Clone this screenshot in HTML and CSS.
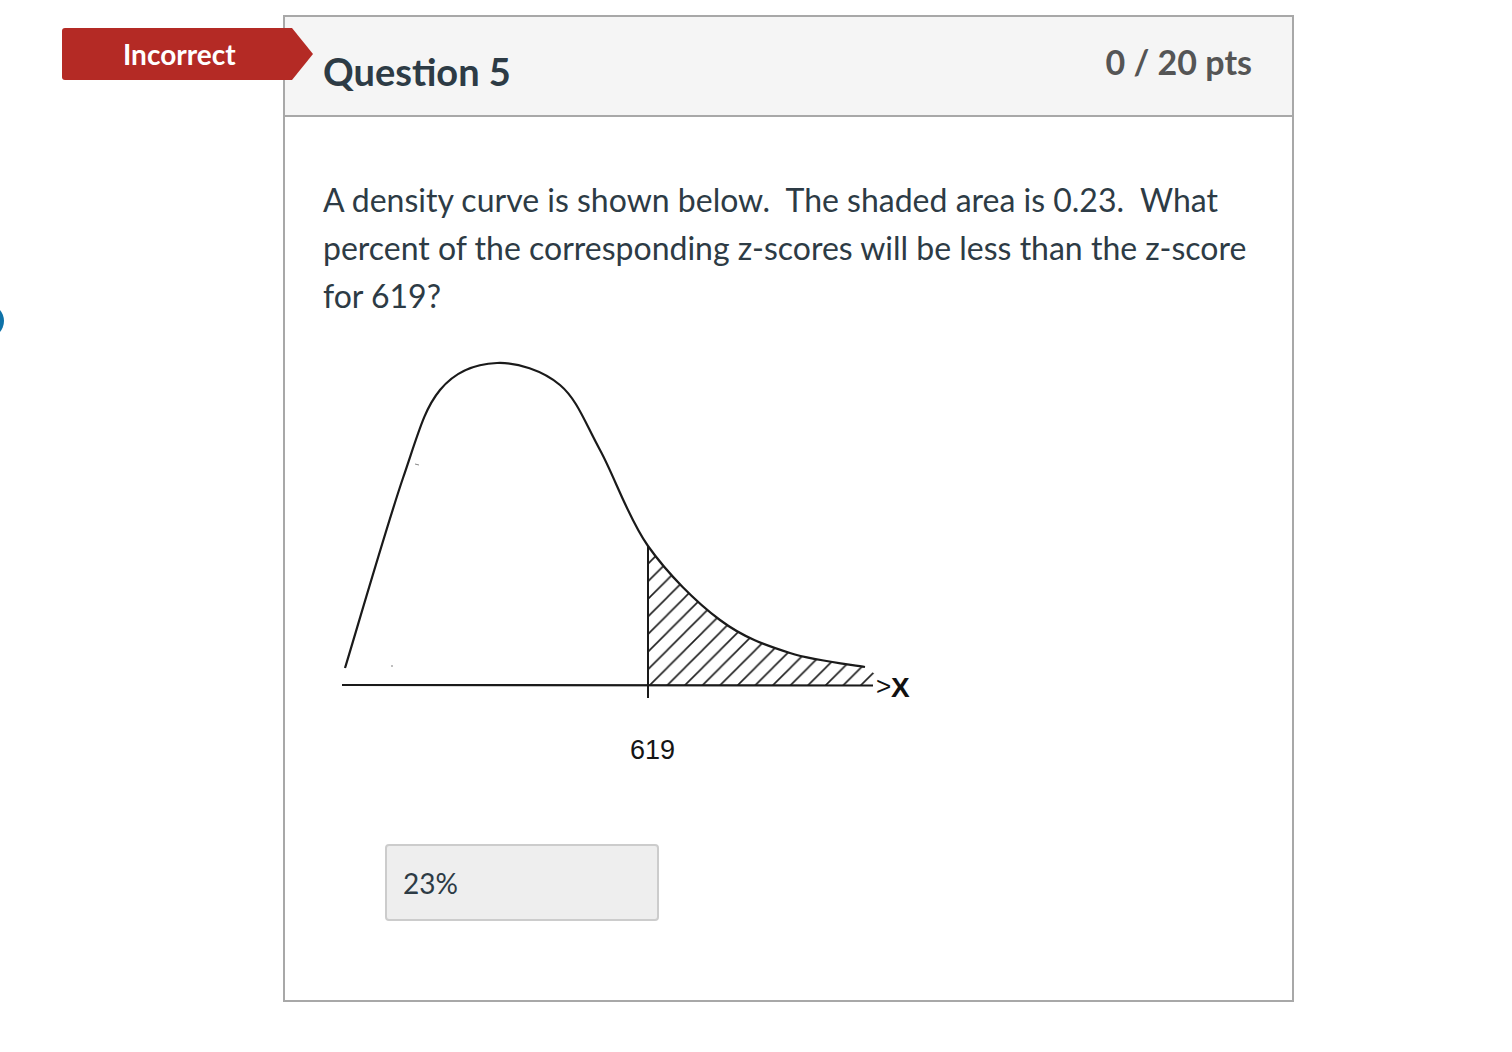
FILE: index.html
```html
<!DOCTYPE html>
<html lang="en">
<head>
<meta charset="utf-8">
<title>Question 5</title>
<link rel="stylesheet" href="styles.css">
</head>
<body>
<span class="side-dot"></span>
<div class="question">
  <div class="badge">Incorrect</div>
  <div class="card">
    <header class="card-header">
      <h2 class="card-title">Question 5</h2>
      <span class="card-pts">0 / 20 pts</span>
    </header>
    <div class="card-body">
      <p class="question-text">A density curve is shown below.&nbsp; The shaded area is 0.23.&nbsp; What percent of the corresponding z-scores will be less than the z-score for 619?</p>
      <svg class="figure" viewBox="330 350 600 420" width="600" height="420" xmlns="http://www.w3.org/2000/svg">
        <defs>
          <pattern id="hatch" patternUnits="userSpaceOnUse" x="650" y="685" width="17.6" height="17.6">
            <path d="M0,17.6 L17.6,0 M-4.4,4.4 L4.4,-4.4 M13.2,22 L22,13.2" stroke="#1e1e1e" stroke-width="1.6"/>
          </pattern>
          <clipPath id="tail">
            <path d="M648,546 C668,574.3 696.3,602.2 720,620 C743.7,637.8 765.8,645.2 790,653 C814.2,660.8 852.5,664.7 865,667 L875,674 L875,685 L648,685 Z"/>
          </clipPath>
        </defs>
        <rect x="640" y="530" width="250" height="160" fill="url(#hatch)" clip-path="url(#tail)"/>
        <path d="M345,668 C354.7,636.3 387.2,524.3 403,478 C418.8,431.7 424.3,409.2 440,390 C455.7,370.8 477,363.8 497,363 C517,362.2 542.8,370.5 560,385 C577.2,399.5 585.3,423.2 600,450 C614.7,476.8 628,517.7 648,546 C668,574.3 696.3,602.2 720,620 C743.7,637.8 765.8,645.2 790,653 C814.2,660.8 852.5,664.7 865,667" fill="none" stroke="#1a1a1a" stroke-width="2.2"/>
        <line x1="648" y1="546" x2="648" y2="698" stroke="#1a1a1a" stroke-width="2"/>
        <line x1="342" y1="685" x2="873" y2="685.5" stroke="#1a1a1a" stroke-width="2.2"/>
        <line x1="415" y1="464" x2="419" y2="465" stroke="#888" stroke-width="1"/>
        <circle cx="392" cy="666" r="1" fill="#aaa"/>
        <text x="876" y="695" class="fig-arrow">&gt;</text>
        <text x="891" y="697" class="fig-x">X</text>
        <text x="630" y="759" class="fig-label">619</text>
      </svg>
      <div class="answer">23%</div>
    </div>
  </div>
</div>
</body>
</html>
```

FILE: styles.css
```css
html, body {
  margin: 0;
  padding: 0;
  background: #ffffff;
  overflow: hidden;
}

body {
  font-family: Lato, "Helvetica Neue", "Liberation Sans", Arial, sans-serif;
  color: #2d3b45;
}

.side-dot {
  position: absolute;
  left: -30px;
  top: 304px;
  width: 34px;
  height: 34px;
  border-radius: 50%;
  background: #0e72a8;
}

.question {
  position: relative;
  padding: 15px 0 0 283px;
}

.badge {
  position: absolute;
  left: 62px;
  top: 28px;
  width: 251px;
  height: 52px;
  box-sizing: border-box;
  padding-left: 61px;
  line-height: 52px;
  font-size: 28px;
  font-weight: 700;
  color: #ffffff;
  background: #b42a25;
  border-radius: 3px 0 0 3px;
  clip-path: polygon(0 0, 230px 0, 100% 50%, 230px 100%, 0 100%);
  z-index: 2;
}

.card {
  width: 1011px;
  box-sizing: border-box;
  border: 2px solid #a8a8a8;
  background: #ffffff;
}

.card-header {
  display: flex;
  justify-content: space-between;
  align-items: flex-start;
  height: 98px;
  padding: 0 40px 0 38px;
  background: #f5f5f5;
  border-bottom: 2px solid #a8a8a8;
}

.card-title {
  margin: 32px 0 0 0;
  font-size: 38px;
  line-height: 1.2;
  font-weight: 700;
  color: #2d3b45;
}

.card-pts {
  margin-top: 25px;
  font-size: 34px;
  line-height: 1.2;
  font-weight: 700;
  color: #555555;
}

.card-body {
  padding: 59px 40px 79px 38px;
}

.question-text {
  margin: 0;
  font-size: 32px;
  line-height: 48px;
  color: #2d3b45;
}

.figure {
  display: block;
  margin: 30px 0 0 7px;
}

.fig-arrow {
  font-family: "Liberation Sans", Arial, sans-serif;
  font-size: 26px;
  fill: #111111;
}

.fig-x {
  font-family: "Liberation Sans", Arial, sans-serif;
  font-size: 28px;
  font-weight: 700;
  fill: #111111;
}

.fig-label {
  font-family: "Liberation Sans", Arial, sans-serif;
  font-size: 27px;
  fill: #151515;
}

.answer {
  display: flex;
  align-items: center;
  box-sizing: border-box;
  width: 274px;
  height: 77px;
  margin: 74px 0 0 62px;
  padding-left: 16px;
  font-size: 28px;
  color: #2d3b45;
  background: #eeeeee;
  border: 2px solid #cccccc;
  border-radius: 4px;
}
```
